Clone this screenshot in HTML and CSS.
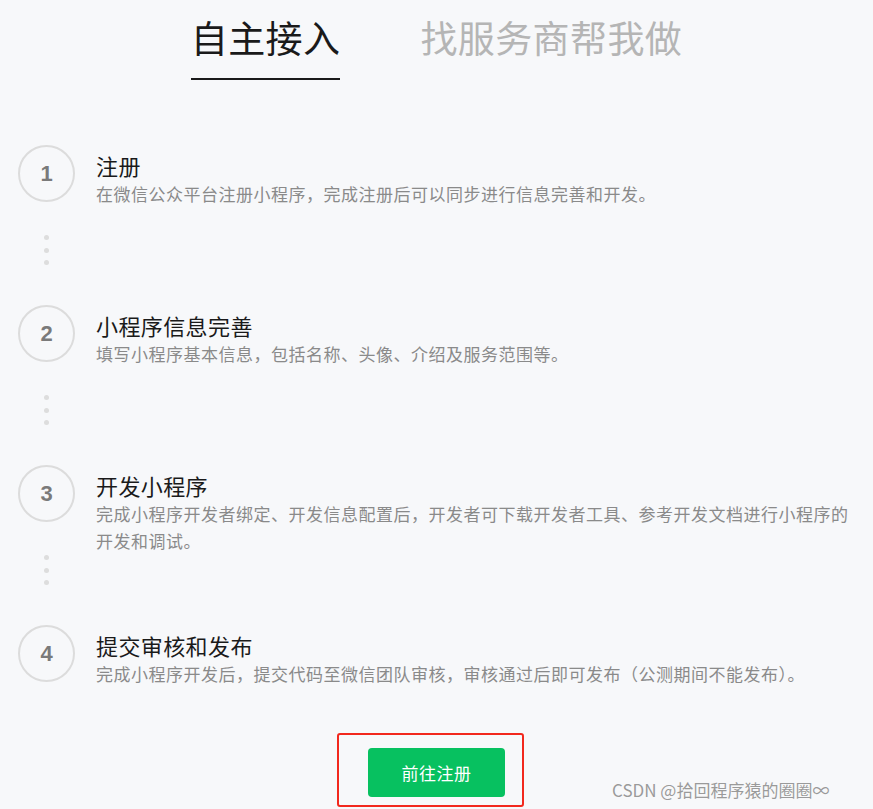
FILE: index.html
```html
<!DOCTYPE html>
<html lang="zh-CN">
<head>
<meta charset="utf-8">
<title>接入流程</title>
<link rel="stylesheet" href="styles.css">
</head>
<body>
<div class="page">
  <div class="tabs">
    <div class="tab active">自主接入</div>
    <div class="tab">找服务商帮我做</div>
  </div>

  <div class="steps">
    <div class="step">
      <div class="rail">
        <div class="num">1</div>
        <div class="dots"><i></i><i></i><i></i></div>
      </div>
      <div class="body">
        <div class="title">注册</div>
        <div class="desc">在微信公众平台注册小程序，完成注册后可以同步进行信息完善和开发。</div>
      </div>
    </div>
    <div class="step">
      <div class="rail">
        <div class="num">2</div>
        <div class="dots"><i></i><i></i><i></i></div>
      </div>
      <div class="body">
        <div class="title">小程序信息完善</div>
        <div class="desc">填写小程序基本信息，包括名称、头像、介绍及服务范围等。</div>
      </div>
    </div>
    <div class="step">
      <div class="rail">
        <div class="num">3</div>
        <div class="dots"><i></i><i></i><i></i></div>
      </div>
      <div class="body">
        <div class="title">开发小程序</div>
        <div class="desc">完成小程序开发者绑定、开发信息配置后，开发者可下载开发者工具、参考开发文档进行小程序的开发和调试。</div>
      </div>
    </div>
    <div class="step last">
      <div class="rail">
        <div class="num">4</div>
      </div>
      <div class="body">
        <div class="title">提交审核和发布</div>
        <div class="desc">完成小程序开发后，提交代码至微信团队审核，审核通过后即可发布（公测期间不能发布）。</div>
      </div>
    </div>
  </div>

  <div class="actions">
    <a class="btn">前往注册</a>
    <span class="mark"></span>
  </div>

  <div class="watermark">CSDN @拾回程序猿的圈圈∞</div>
</div>
</body>
</html>
```

FILE: styles.css
```css
html, body {
  margin: 0;
  padding: 0;
  background: #f7f8fa;
}
body {
  font-family: "Microsoft YaHei", "Noto Sans CJK SC", "Noto Sans", sans-serif;
  color: #1a1a1a;
}
.page {
  position: relative;
  width: 873px;
  height: 809px;
  overflow: hidden;
}
.tabs {
  display: flex;
  justify-content: center;
  gap: 80px;
  padding-top: 12px;
}
.tab {
  font-size: 37px;
  line-height: 50px;
  height: 50px;
  padding-bottom: 16px;
  color: #b5b5b5;
  letter-spacing: 0.4px;
  white-space: nowrap;
}
.tab.active {
  color: #1a1a1a;
  border-bottom: 2px solid #1a1a1a;
}
.steps {
  padding: 65px 0 0 18px;
}
.step {
  display: flex;
  align-items: flex-start;
}
.rail {
  width: 57px;
  height: 160px;
  display: flex;
  flex-direction: column;
  align-items: center;
  flex-shrink: 0;
}
.step.last .rail {
  height: 57px;
}
.num {
  box-sizing: border-box;
  width: 57px;
  height: 57px;
  border: 2px solid #dcdcdc;
  border-radius: 50%;
  display: flex;
  align-items: center;
  justify-content: center;
  font-family: "Liberation Sans", Arial, sans-serif;
  font-weight: bold;
  font-size: 22px;
  color: #7a7a7a;
}
.dots {
  margin-top: 33px;
  display: flex;
  flex-direction: column;
  gap: 7.5px;
}
.dots i {
  display: block;
  width: 5px;
  height: 5px;
  border-radius: 50%;
  background: #dddddd;
}
.body {
  margin-left: 21px;
  padding-top: 5px;
}
.title {
  font-size: 22px;
  line-height: 30px;
  letter-spacing: 0.4px;
  color: #1a1a1a;
}
.desc {
  font-size: 17px;
  line-height: 27px;
  letter-spacing: 0.5px;
  color: #8a8a8a;
  max-width: 756px;
}
.actions {
  position: relative;
  display: flex;
  justify-content: center;
  margin-top: 61px;
}
.btn {
  display: flex;
  align-items: center;
  justify-content: center;
  width: 137px;
  height: 49px;
  border-radius: 4px;
  background: #07c160;
  color: #ffffff;
  font-size: 17px;
  letter-spacing: 0.5px;
}
.mark {
  position: absolute;
  left: 337px;
  top: -15px;
  width: 187px;
  height: 74px;
  box-sizing: border-box;
  border: 2px solid #f2281d;
  border-radius: 3px;
}
.watermark {
  position: absolute;
  left: 612px;
  top: 778px;
  font-size: 17px;
  line-height: 24px;
  color: #9a9a9a;
  white-space: nowrap;
  text-shadow: 0 0 1px #ffffff;
}
```
